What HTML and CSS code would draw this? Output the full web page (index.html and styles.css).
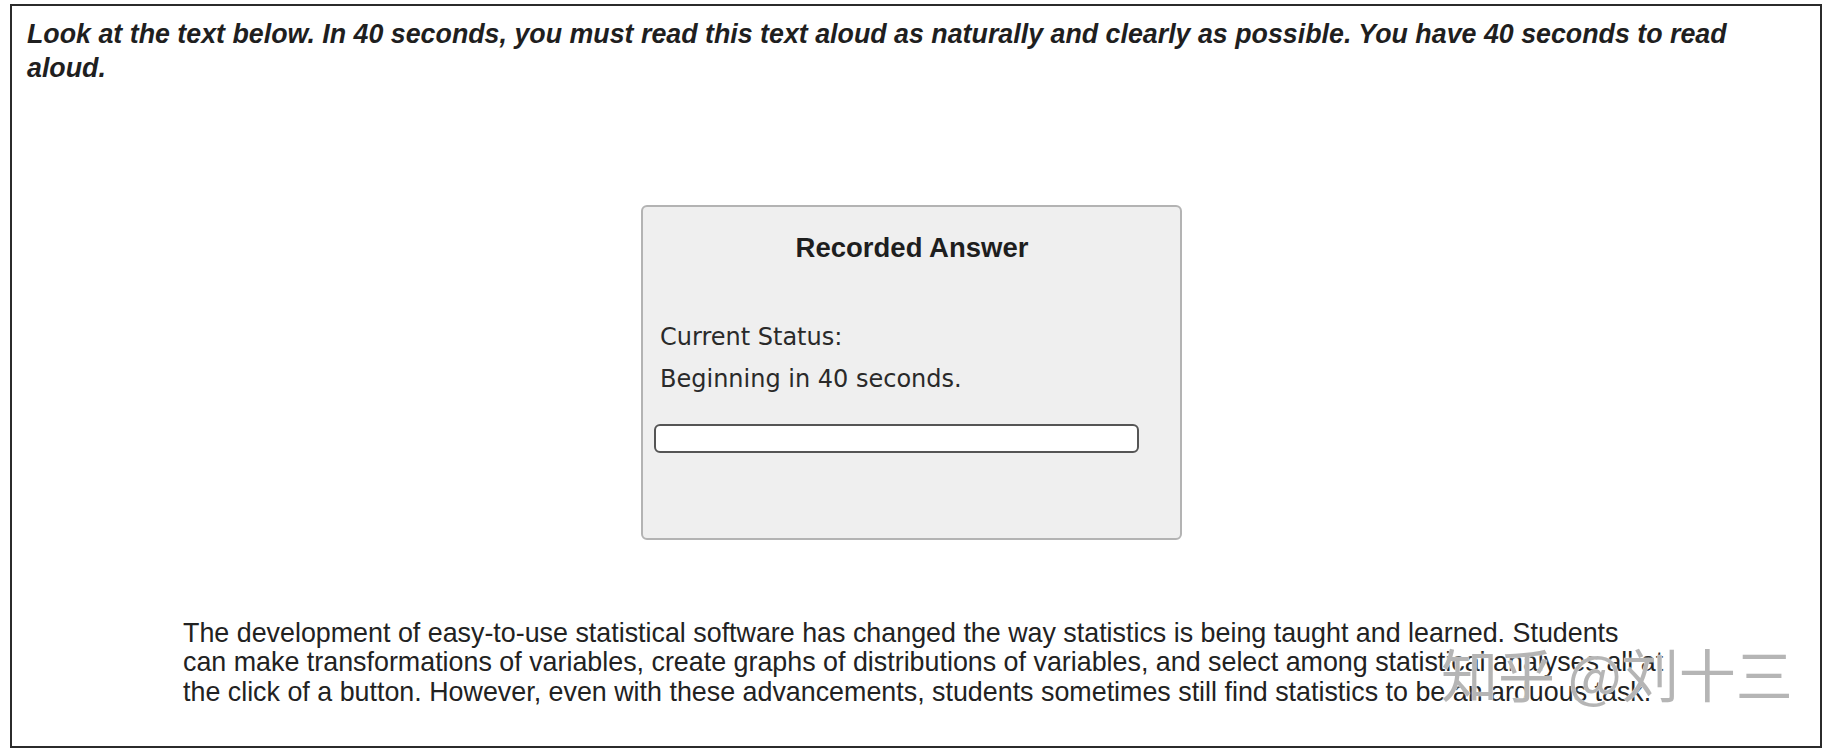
FILE: index.html
```html
<!DOCTYPE html>
<html lang="en">
<head>
<meta charset="utf-8">
<title>Read Aloud</title>
<link rel="stylesheet" href="styles.css">
</head>
<body>
<div class="frame">
  <p class="instructions">Look at the text below. In 40 seconds, you must read this text aloud as naturally and clearly as possible. You have 40 seconds to read aloud.</p>
  <section class="recorder">
    <h2 class="recorder-title">Recorded Answer</h2>
    <div class="status">
      <div class="status-label">Current Status:</div>
      <div class="status-value">Beginning in 40 seconds.</div>
    </div>
    <div class="progress"><div class="progress-fill"></div></div>
  </section>
  <p class="passage">The development of easy-to-use statistical software has changed the way statistics is being taught and learned. Students<br>can make transformations of variables, create graphs of distributions of variables, and select among statistical analyses all at<br>the click of a button. However, even with these advancements, students sometimes still find statistics to be an arduous task.</p>
  <div class="watermark">知乎 @刘十三</div>
</div>
</body>
</html>
```
FILE: styles.css
```css
html, body {
  margin: 0;
  padding: 0;
  background: #ffffff;
}

.frame {
  position: relative;
  box-sizing: border-box;
  margin: 4px 8px 0 10px;
  height: 744px;
  border: 2px solid #2b2b2b;
  color: #222222;
}

.instructions {
  margin: 0;
  padding: 11px 60px 0 15px;
  font-family: "Liberation Sans", Arial, sans-serif;
  font-style: italic;
  font-weight: bold;
  font-size: 26.8px;
  line-height: 34px;
  color: #1f1f1f;
}

.recorder {
  box-sizing: border-box;
  width: 541px;
  height: 335px;
  margin: 120px 0 0 629px;
  padding: 25px 10px 0 11px;
  background: #efefef;
  border: 2px solid #b3b3b3;
  border-radius: 6px;
}

.recorder-title {
  margin: 0;
  text-align: center;
  font-family: "Liberation Sans", Arial, sans-serif;
  font-weight: bold;
  font-size: 27.5px;
  line-height: 32px;
  color: #1e1e1e;
}

.status {
  margin: 52px 0 0 6px;
  font-family: "DejaVu Sans", Verdana, sans-serif;
  font-size: 24px;
  line-height: 42px;
  color: #2a2a2a;
}

.progress {
  box-sizing: border-box;
  width: 485px;
  height: 29px;
  margin-top: 24px;
  background: #ffffff;
  border: 2px solid #555555;
  border-radius: 6px;
  overflow: hidden;
}

.progress-fill {
  width: 0;
  height: 100%;
}

.passage {
  margin: 78.5px 0 0;
  padding-left: 171px;
  font-family: "Liberation Sans", Arial, sans-serif;
  font-size: 26.85px;
  line-height: 29.5px;
  color: #222222;
  white-space: nowrap;
}

.watermark {
  position: absolute;
  left: 1429px;
  top: 633px;
  font-family: "Noto Sans CJK SC", sans-serif;
  font-weight: 400;
  font-size: 57px;
  line-height: 66px;
  color: rgba(175, 175, 175, 0.92);
  text-shadow: 0 0 2px #ffffff, 0 0 1px #ffffff;
  white-space: nowrap;
}
```
